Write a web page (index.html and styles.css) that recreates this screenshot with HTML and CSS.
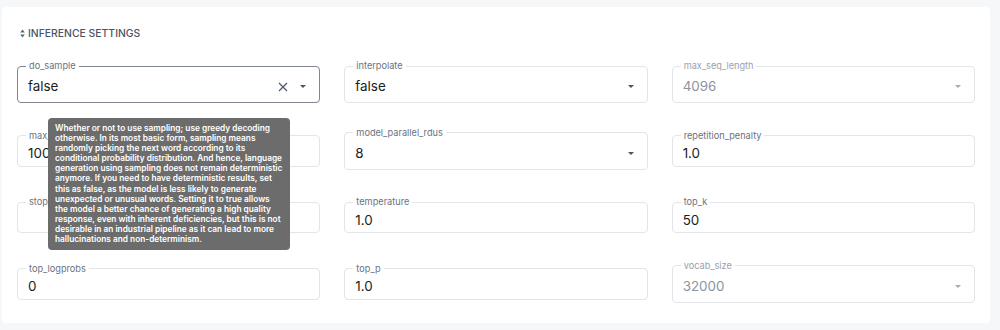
FILE: index.html
```html
<!DOCTYPE html>
<html>
<head>
<meta charset="utf-8">
<link rel="stylesheet" href="styles.css">
</head>
<body>
<div class="card">
  <div class="header">
    <svg class="sort-icon" width="5" height="9" viewBox="0 0 5 9"><path d="M2.5 0.5 L4.8 3.5 H0.2 Z M2.5 8.5 L4.8 5.5 H0.2 Z" fill="#5b6473"/></svg>
    <span>INFERENCE SETTINGS</span>
  </div>
  <div class="grid">
    <fieldset class="field select focused">
      <legend>do_sample</legend>
      <span class="value">false</span>
      <svg class="clear" width="10" height="10" viewBox="0 0 10 10"><path d="M1 1 L9 9 M9 1 L1 9" stroke="#4b5563" stroke-width="1.2"/></svg>
      <span class="caret"></span>
    </fieldset>
    <fieldset class="field select">
      <legend>interpolate</legend>
      <span class="value">false</span>
      <span class="caret"></span>
    </fieldset>
    <fieldset class="field select disabled">
      <legend>max_seq_length</legend>
      <span class="value">4096</span>
      <span class="caret"></span>
    </fieldset>

    <fieldset class="field text">
      <legend>max_tokens_to_generate</legend>
      <span class="value">1000</span>
    </fieldset>
    <fieldset class="field select">
      <legend>model_parallel_rdus</legend>
      <span class="value">8</span>
      <span class="caret"></span>
    </fieldset>
    <fieldset class="field text">
      <legend>repetition_penalty</legend>
      <span class="value">1.0</span>
    </fieldset>

    <fieldset class="field text">
      <legend>stop_sequences</legend>
      <span class="value"></span>
    </fieldset>
    <fieldset class="field text">
      <legend>temperature</legend>
      <span class="value">1.0</span>
    </fieldset>
    <fieldset class="field text">
      <legend>top_k</legend>
      <span class="value">50</span>
    </fieldset>

    <fieldset class="field text">
      <legend>top_logprobs</legend>
      <span class="value">0</span>
    </fieldset>
    <fieldset class="field text">
      <legend>top_p</legend>
      <span class="value">1.0</span>
    </fieldset>
    <fieldset class="field select disabled">
      <legend>vocab_size</legend>
      <span class="value">32000</span>
      <span class="caret"></span>
    </fieldset>
  </div>
  <div class="tooltip">Whether or not to use sampling; use greedy decoding<br>otherwise. In its most basic form, sampling means<br>randomly picking the next word according to its<br>conditional probability distribution. And hence, language<br>generation using sampling does not remain deterministic<br>anymore. If you need to have deterministic results, set<br>this as false, as the model is less likely to generate<br>unexpected or unusual words. Setting it to true allows<br>the model a better chance of generating a high quality<br>response, even with inherent deficiencies, but this is not<br>desirable in an industrial pipeline as it can lead to more<br>hallucinations and non-determinism.</div>
</div>
</body>
</html>
```

FILE: styles.css
```css
html, body {
  margin: 0;
  padding: 0;
  background: #f6f7f9;
  font-family: Inter, "Noto Sans", sans-serif;
}

.card {
  position: relative;
  margin: 7px 0 0 2px;
  width: 988px;
  height: 316px;
  background: #ffffff;
  border-radius: 4px;
  box-sizing: border-box;
}

.header {
  display: flex;
  align-items: center;
  gap: 3px;
  padding: 19px 0 0 18px;
  height: 14px;
  font-size: 10.4px;
  font-weight: 500;
  color: #4b5565;
}

.sort-icon {
  display: block;
}

.grid {
  display: grid;
  grid-template-columns: repeat(3, 1fr);
  grid-auto-rows: 42px;
  column-gap: 24px;
  row-gap: 24.5px;
  padding: 0 15px;
  margin-top: 21px;
  align-items: center;
}

.field {
  margin: 0;
  padding: 0 12px 0 10px;
  min-width: 0;
  border: 1px solid #e3e5e8;
  border-radius: 4px;
  display: flex;
  align-items: center;
  position: relative;
  box-sizing: border-box;
}

.field legend {
  font-size: 9.2px;
  color: #6b7280;
  padding: 0 3px;
  margin-left: -2px;
  line-height: 10px;
}

.field.select {
  height: 42px;
}

.field.text {
  height: 36px;
}

.field.focused {
  border-color: #80868f;
}

.value {
  flex: 1;
  font-size: 13.4px;
  color: #1a1d21;
  margin-top: 0;
}

.field.select .value {
  margin-top: -1px;
}

.field.disabled .value {
  color: #8b93a1;
}
.field.disabled legend {
  color: #9aa1ac;
}

.clear {
  margin: 0 12px 0 0;
}

.caret {
  width: 0;
  height: 0;
  border-left: 3.5px solid transparent;
  border-right: 3.5px solid transparent;
  border-top: 3.5px solid #4b5563;
  margin-top: 0;
  margin-right: 1px;
}

.field.disabled .caret {
  border-top-color: #a3a9b3;
}

.tooltip {
  position: absolute;
  left: 46px;
  top: 111px;
  width: 242px;
  box-sizing: border-box;
  padding: 5px 6px 6px 7px;
  background: #6c6c6c;
  color: #ffffff;
  border-radius: 4px;
  font-size: 8.3px;
  font-weight: 600;
  line-height: 10.1px;
  white-space: nowrap;
}
```
